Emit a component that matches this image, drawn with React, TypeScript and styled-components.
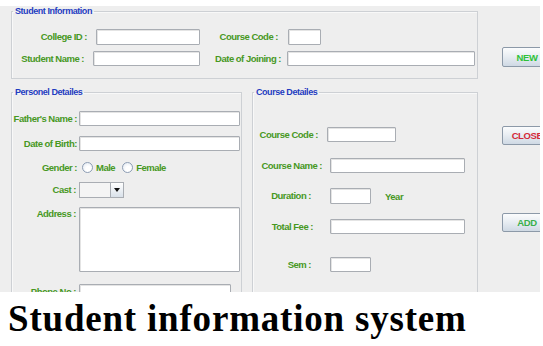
import * as React from 'react'
import styled, { createGlobalStyle } from 'styled-components'

const GlobalStyle = createGlobalStyle`
  body {
    margin: 0;
    background: #ffffff;
  }
`

const uiFont = `'Liberation Sans', Arial, sans-serif`

const Page = styled.div`
  width: 543px;
  height: 346px;
  overflow: hidden;
  background: #ffffff;
`

const Shot = styled.div`
  width: 540px;
  height: 292px;
  overflow: hidden;
  background: #eeeeee;
  display: flex;
  flex-direction: column;
`

const TopStrip = styled.div`
  height: 6px;
  flex-shrink: 0;
  background: #ffffff;
`

const Body = styled.div`
  display: flex;
  padding-left: 11px;
`

const MainColumn = styled.div`
  width: 467px;
  display: flex;
  flex-direction: column;
  gap: 8px;
`

const SplitRow = styled.div`
  display: flex;
  gap: 10px;
`

const Group = styled.fieldset<{ $w: number; $h?: number }>`
  margin: 0;
  padding: 0;
  min-width: 0;
  width: ${p => p.$w}px;
  ${p => (p.$h ? `height: ${p.$h}px;` : '')}
  box-sizing: border-box;
  border: 1px solid #cdd0d4;
  box-shadow: inset 1px 1px 0 #f8f8f8;
  display: flex;
  flex-direction: column;
`

const Legend = styled.legend`
  margin-left: 1px;
  padding: 0 2px;
  font-family: ${uiFont};
  font-weight: bold;
  font-size: 9px;
  letter-spacing: -0.45px;
  line-height: 10px;
  color: #1f3cc0;
`

const Row = styled.div<{ $mt: number }>`
  display: flex;
  align-items: center;
  min-height: 15px;
  margin-top: ${p => p.$mt}px;
`

const TopRow = styled(Row)`
  align-items: flex-start;
`

const Label = styled.span<{ $w: number; $top?: number }>`
  width: ${p => p.$w}px;
  flex-shrink: 0;
  text-align: right;
  white-space: nowrap;
  font-family: ${uiFont};
  font-weight: bold;
  font-size: 9.5px;
  letter-spacing: -0.5px;
  line-height: 12px;
  color: #47981f;
  ${p => (p.$top ? `padding-top: ${p.$top}px;` : '')}
`

const Field = styled.div<{ $w: number; $h?: number; $ml: number }>`
  width: ${p => p.$w}px;
  height: ${p => p.$h ?? 15}px;
  margin-left: ${p => p.$ml}px;
  flex-shrink: 0;
  box-sizing: border-box;
  background: #ffffff;
  border: 1px solid #a9adb3;
  border-radius: 1px;
  box-shadow: inset 1px 1px 0 #e4e4e4;
`

const Note = styled.span<{ $ml: number }>`
  margin-left: ${p => p.$ml}px;
  font-family: ${uiFont};
  font-weight: bold;
  font-size: 9.5px;
  letter-spacing: -0.5px;
  color: #47981f;
`

const Radio = styled.span<{ $ml: number }>`
  width: 9px;
  height: 9px;
  margin-left: ${p => p.$ml}px;
  margin-right: 3px;
  border-radius: 50%;
  border: 1px solid #8d9db4;
  background: radial-gradient(circle at 60% 65%, #ffffff 30%, #dfe6ef 100%);
  flex-shrink: 0;
`

const Combo = styled.div`
  display: flex;
  margin-left: 3px;
  height: 16px;
`

const ComboBox = styled.div`
  width: 31px;
  box-sizing: border-box;
  background: #f4f4f4;
  border: 1px solid #a9adb3;
  border-right: none;
`

const ComboArrow = styled.div`
  width: 14px;
  box-sizing: border-box;
  border: 1px solid #a9adb3;
  background: linear-gradient(#ffffff, #d9e1ea);
  display: flex;
  align-items: center;
  justify-content: center;

  &::after {
    content: '';
    border-left: 3.5px solid transparent;
    border-right: 3.5px solid transparent;
    border-top: 4px solid #111111;
  }
`

const ButtonColumn = styled.div`
  display: flex;
  flex-direction: column;
  padding-left: 24px;
`

const Button = styled.div<{ $mt: number; $color: string; $h: number }>`
  width: 50px;
  height: ${p => p.$h}px;
  margin-top: ${p => p.$mt}px;
  box-sizing: border-box;
  border: 1px solid #8c99a8;
  border-radius: 2px;
  background: linear-gradient(#fbfcfd 0%, #e9eef3 45%, #cfd9e4 100%);
  display: flex;
  align-items: center;
  justify-content: center;
  font-family: ${uiFont};
  font-weight: bold;
  font-size: 9.5px;
  letter-spacing: -0.4px;
  color: ${p => p.$color};
`

const Caption = styled.h1`
  margin: 7px 0 0 8px;
  font-family: 'Liberation Serif', 'Times New Roman', serif;
  font-weight: bold;
  font-size: 37px;
  letter-spacing: 0.8px;
  line-height: 40px;
  color: #000000;
  white-space: nowrap;
`

export default function App() {
  return (
    <Page>
      <GlobalStyle />
      <Shot>
        <TopStrip />
        <Body>
          <MainColumn>
            <Group $w={467} $h={73}>
              <Legend>Student Information</Legend>
              <Row $mt={13}>
                <Label $w={75}>College ID :</Label>
                <Field $w={104} $h={16} $ml={9} />
                <Label $w={78}>Course Code :</Label>
                <Field $w={33} $h={16} $ml={10} />
              </Row>
              <Row $mt={6}>
                <Label $w={72}>Student Name :</Label>
                <Field $w={107} $ml={9} />
                <Label $w={81}>Date of Joining :</Label>
                <Field $w={188} $ml={6} />
              </Row>
            </Group>
            <SplitRow>
              <Group $w={231} $h={230}>
                <Legend>Personel Detailes</Legend>
                <Row $mt={14}>
                  <Label $w={65}>Father's Name :</Label>
                  <Field $w={161} $ml={2} />
                </Row>
                <Row $mt={10}>
                  <Label $w={65}>Date of Birth:</Label>
                  <Field $w={161} $ml={2} />
                </Row>
                <Row $mt={9}>
                  <Label $w={65}>Gender :</Label>
                  <Radio $ml={5} />
                  <Note $ml={0}>Male</Note>
                  <Radio $ml={7} />
                  <Note $ml={0}>Female</Note>
                </Row>
                <Row $mt={7}>
                  <Label $w={64}>Cast :</Label>
                  <Combo>
                    <ComboBox />
                    <ComboArrow />
                  </Combo>
                </Row>
                <TopRow $mt={9}>
                  <Label $w={64} $top={1}>Address :</Label>
                  <Field $w={161} $h={65} $ml={3} />
                </TopRow>
                <Row $mt={12}>
                  <Label $w={64}>Phone No :</Label>
                  <Field $w={152} $h={16} $ml={3} />
                </Row>
              </Group>
              <Group $w={226} $h={230}>
                <Legend>Course Detailes</Legend>
                <Row $mt={30}>
                  <Label $w={65}>Course Code :</Label>
                  <Field $w={69} $ml={9} />
                </Row>
                <Row $mt={16}>
                  <Label $w={69}>Course Name :</Label>
                  <Field $w={135} $ml={8} />
                </Row>
                <Row $mt={15}>
                  <Label $w={58}>Duration :</Label>
                  <Field $w={41} $h={16} $ml={19} />
                  <Note $ml={14}>Year</Note>
                </Row>
                <Row $mt={15}>
                  <Label $w={60}>Total Fee :</Label>
                  <Field $w={135} $ml={17} />
                </Row>
                <Row $mt={23}>
                  <Label $w={58}>Sem :</Label>
                  <Field $w={41} $ml={19} />
                </Row>
              </Group>
            </SplitRow>
          </MainColumn>
          <ButtonColumn>
            <Button $mt={41} $h={20} $color="#2fc23a">NEW</Button>
            <Button $mt={59} $h={19} $color="#d42a3a">CLOSE</Button>
            <Button $mt={68} $h={19} $color="#39b04c">ADD</Button>
          </ButtonColumn>
        </Body>
      </Shot>
      <Caption>Student information system</Caption>
    </Page>
  )
}
